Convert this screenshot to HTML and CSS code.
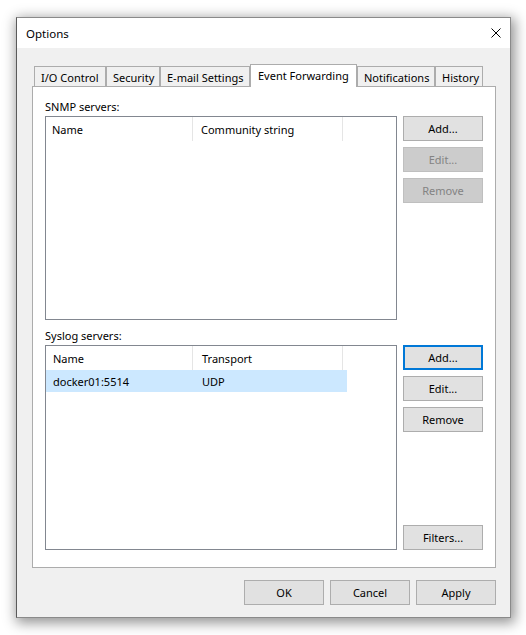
FILE: index.html
```html
<!DOCTYPE html>
<html>
<head>
<meta charset="utf-8">
<link rel="stylesheet" href="styles.css">
</head>
<body>
<div class="window">
  <div class="titlebar">
    <span class="title">Options</span>
    <svg class="close" width="10" height="10" viewBox="0 0 10 10"><path d="M0.5 0.5 L9.5 9.5 M9.5 0.5 L0.5 9.5" stroke="#000" stroke-width="1" fill="none"/></svg>
  </div>
  <div class="client">
    <div class="tabs">
      <div class="tab t1">I/O Control</div>
      <div class="tab t2">Security</div>
      <div class="tab t3">E-mail Settings</div>
      <div class="tab t4 selected">Event Forwarding</div>
      <div class="tab t5">Notifications</div>
      <div class="tab t6">History</div>
    </div>
    <div class="panel">
      <div class="section first">
        <div class="label">SNMP servers:</div>
        <div class="list snmp">
          <div class="header">
            <div class="col c1">Name</div>
            <div class="col c2">Community string</div>
          </div>
        </div>
        <div class="btncol">
          <div class="btn">Add...</div>
          <div class="btn disabled">Edit...</div>
          <div class="btn disabled">Remove</div>
        </div>
      </div>
      <div class="section second">
        <div class="label">Syslog servers:</div>
        <div class="list syslog">
          <div class="header">
            <div class="col c1">Name</div>
            <div class="col c2">Transport</div>
          </div>
          <div class="row selrow">
            <div class="cell c1">docker01:5514</div>
            <div class="cell c2">UDP</div>
          </div>
        </div>
        <div class="btncol">
          <div class="btn focus">Add...</div>
          <div class="btn">Edit...</div>
          <div class="btn">Remove</div>
          <div class="btn filters">Filters...</div>
        </div>
      </div>
    </div>
    <div class="footer">
      <div class="btn">OK</div>
      <div class="btn">Cancel</div>
      <div class="btn">Apply</div>
    </div>
  </div>
</div>
</body>
</html>
```
FILE: styles.css
```css
html, body {
  margin: 0;
  padding: 0;
  background: #ffffff;
}
body {
  font-family: "Noto Sans", "Open Sans", "Liberation Sans", sans-serif;
  font-size: 11px;
  color: #000;
  width: 526px;
  height: 635px;
  overflow: hidden;
}
.window {
  margin: 17px 0 0 16px;
  width: 493px;
  height: 599px;
  border: 1px solid #8a8a8a;
  border-left-color: #5a5a5a;
  box-shadow: 2px 3px 12px 2px rgba(0,0,0,0.42);
  background: #f0f0f0;
  display: flex;
  flex-direction: column;
}
.titlebar {
  height: 30px;
  background: #ffffff;
  display: flex;
  align-items: center;
  padding: 0 9px 0 9px;
  flex: none;
}
.title {
  line-height: 16px;
  font-size: 11.5px;
  margin-top: 1px;
}
.close {
  margin-left: auto;
  margin-top: -1px;
}
.client {
  flex: 1;
  padding: 16px 14px 0 15px;
  display: flex;
  flex-direction: column;
}
.tabs {
  display: flex;
  align-items: flex-end;
  height: 22px;
  padding-left: 2px;
  position: relative;
  z-index: 1;
}
.tab {
  box-sizing: border-box;
  height: 20px;
  border: 1px solid #acacac;
  border-bottom: none;
  background: #f0f0f0;
  padding-left: 6px;
  line-height: 21px;
  white-space: nowrap;
  overflow: hidden;
}
.t1 { width: 72px; }
.t2 { width: 54px; }
.t3 { width: 90px; }
.t4 { width: 107px; }
.t5 { width: 78px; }
.t6 { width: 48px; }
.tab.selected {
  height: 23px;
  margin-bottom: -1px;
  background: #ffffff;
  line-height: 22px;
  padding-left: 7px;
}
.panel {
  box-sizing: border-box;
  height: 482px;
  background: #ffffff;
  border: 1px solid #acacac;
  padding: 11px 12px 0 12px;
}
.section {
  display: grid;
  grid-template-columns: 352px 80px;
  column-gap: 6px;
  row-gap: 2px;
}
.section.second {
  margin-top: 7px;
}
.label {
  grid-column: 1 / 3;
  line-height: 17px;
  height: 16px;
}
.list {
  box-sizing: border-box;
  border: 1px solid #828790;
  background: #fff;
}
.snmp { height: 204px; }
.syslog { height: 205px; }
.header {
  display: flex;
  height: 24px;
  line-height: 25px;
}
.col {
  box-sizing: border-box;
  border-right: 1px solid #e5e5e5;
  white-space: nowrap;
}
.col.c1 { width: 147px; padding-left: 6px; }
.col.c2 { width: 150px; padding-left: 8px; }
.row {
  display: flex;
  height: 22px;
  line-height: 23px;
  width: 301px;
}
.selrow { background: #cce8ff; }
.cell { box-sizing: border-box; white-space: nowrap; }
.cell.c1 { width: 147px; padding-left: 7px; }
.cell.c2 { width: 150px; padding-left: 9px; }
.syslog .col.c1 { padding-left: 7px; }
.syslog .col.c2 { padding-left: 9px; }
.btncol {
  display: flex;
  flex-direction: column;
  gap: 6px;
}
.btn {
  box-sizing: border-box;
  width: 80px;
  height: 25px;
  border: 1px solid #adadad;
  background: #e1e1e1;
  text-align: center;
  line-height: 24px;
}
.btn.disabled {
  background: #cccccc;
  border-color: #bfbfbf;
  color: #838383;
}
.btn.focus {
  border: 2px solid #0078d7;
  line-height: 22px;
}
.btn.filters {
  margin-top: auto;
}
.footer {
  display: flex;
  justify-content: flex-end;
  gap: 6px;
  margin-top: 12px;
}
```
